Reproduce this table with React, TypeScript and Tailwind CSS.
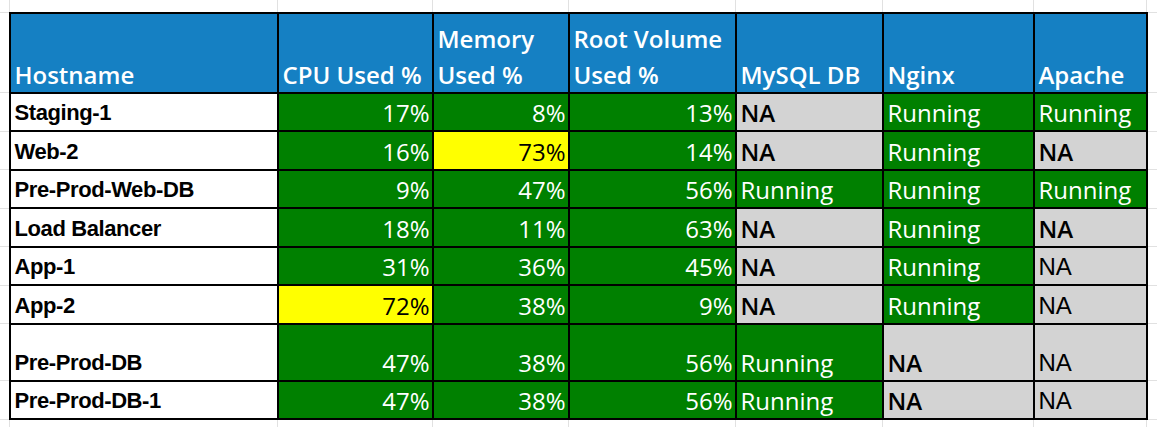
import React from 'react';

type Tone = 'green' | 'yellow' | 'gray';
type Cell = { text: string; tone: Tone; kind?: 'num' | 'text' | 'naBold' | 'naPlain' };

const hosts: { name: string; tall?: boolean; cells: Cell[] }[] = [
  {
    name: 'Staging-1',
    cells: [
      { text: '17%', tone: 'green', kind: 'num' },
      { text: '8%', tone: 'green', kind: 'num' },
      { text: '13%', tone: 'green', kind: 'num' },
      { text: 'NA', tone: 'gray', kind: 'naBold' },
      { text: 'Running', tone: 'green' },
      { text: 'Running', tone: 'green' },
    ],
  },
  {
    name: 'Web-2',
    cells: [
      { text: '16%', tone: 'green', kind: 'num' },
      { text: '73%', tone: 'yellow', kind: 'num' },
      { text: '14%', tone: 'green', kind: 'num' },
      { text: 'NA', tone: 'gray', kind: 'naBold' },
      { text: 'Running', tone: 'green' },
      { text: 'NA', tone: 'gray', kind: 'naBold' },
    ],
  },
  {
    name: 'Pre-Prod-Web-DB',
    cells: [
      { text: '9%', tone: 'green', kind: 'num' },
      { text: '47%', tone: 'green', kind: 'num' },
      { text: '56%', tone: 'green', kind: 'num' },
      { text: 'Running', tone: 'green' },
      { text: 'Running', tone: 'green' },
      { text: 'Running', tone: 'green' },
    ],
  },
  {
    name: 'Load Balancer',
    cells: [
      { text: '18%', tone: 'green', kind: 'num' },
      { text: '11%', tone: 'green', kind: 'num' },
      { text: '63%', tone: 'green', kind: 'num' },
      { text: 'NA', tone: 'gray', kind: 'naBold' },
      { text: 'Running', tone: 'green' },
      { text: 'NA', tone: 'gray', kind: 'naBold' },
    ],
  },
  {
    name: 'App-1',
    cells: [
      { text: '31%', tone: 'green', kind: 'num' },
      { text: '36%', tone: 'green', kind: 'num' },
      { text: '45%', tone: 'green', kind: 'num' },
      { text: 'NA', tone: 'gray', kind: 'naBold' },
      { text: 'Running', tone: 'green' },
      { text: 'NA', tone: 'gray', kind: 'naPlain' },
    ],
  },
  {
    name: 'App-2',
    cells: [
      { text: '72%', tone: 'yellow', kind: 'num' },
      { text: '38%', tone: 'green', kind: 'num' },
      { text: '9%', tone: 'green', kind: 'num' },
      { text: 'NA', tone: 'gray', kind: 'naBold' },
      { text: 'Running', tone: 'green' },
      { text: 'NA', tone: 'gray', kind: 'naPlain' },
    ],
  },
  {
    name: 'Pre-Prod-DB',
    tall: true,
    cells: [
      { text: '47%', tone: 'green', kind: 'num' },
      { text: '38%', tone: 'green', kind: 'num' },
      { text: '56%', tone: 'green', kind: 'num' },
      { text: 'Running', tone: 'green' },
      { text: 'NA', tone: 'gray', kind: 'naBold' },
      { text: 'NA', tone: 'gray', kind: 'naPlain' },
    ],
  },
  {
    name: 'Pre-Prod-DB-1',
    cells: [
      { text: '47%', tone: 'green', kind: 'num' },
      { text: '38%', tone: 'green', kind: 'num' },
      { text: '56%', tone: 'green', kind: 'num' },
      { text: 'Running', tone: 'green' },
      { text: 'NA', tone: 'gray', kind: 'naBold' },
      { text: 'NA', tone: 'gray', kind: 'naPlain' },
    ],
  },
];

const toneClass: Record<Tone, string> = {
  green: 'bg-[#008000] text-white',
  yellow: 'bg-[#ffff00] text-black',
  gray: 'bg-[#d3d3d3] text-black',
};

const kindClass = {
  num: "text-right pr-[2px] font-['Open_Sans',sans-serif] text-[24px]",
  text: "text-left pl-[4px] font-['Open_Sans',sans-serif] text-[24px]",
  naBold: "text-left pl-[4px] font-['Open_Sans',sans-serif] font-semibold text-[24px]",
  naPlain: "text-left pl-[4px] font-['Liberation_Sans',Arial,sans-serif] text-[24px]",
};

// excel gridline cell around the table
const grid = 'border border-[#e1e1e1] p-0';
const cellBase = 'border-2 border-black align-bottom leading-[28px] pb-[3px] whitespace-nowrap overflow-hidden';
const headCell = `${cellBase} bg-[#1580c3] text-white text-left pl-[4px] font-['Open_Sans',sans-serif] font-semibold text-[24px] leading-[36px]`;

const headers: React.ReactNode[] = [
  'Hostname',
  'CPU Used %',
  <>Memory<br />Used %</>,
  <>Root Volume<br />Used %</>,
  'MySQL DB',
  'Nginx',
  'Apache',
];

const App: React.FC = () => {
  return (
    <div className="w-[1157px] h-[427px] bg-white overflow-hidden">
      <table className="table-fixed border-collapse w-[1168px] -mt-[1px] -ml-[1px]">
        <colgroup>
          <col className="w-[10px]" />
          <col className="w-[268px]" />
          <col className="w-[155px]" />
          <col className="w-[136px]" />
          <col className="w-[167px]" />
          <col className="w-[147px]" />
          <col className="w-[151px]" />
          <col className="w-[113px]" />
          <col />
        </colgroup>
        <tbody>
          {/* row above the table */}
          <tr className="h-[13px]">
            {Array.from({ length: 9 }).map((_, i) => (
              <td key={i} className={grid} />
            ))}
          </tr>

          <tr className="h-[80px]">
            <td className={grid} />
            {headers.map((h, i) => (
              <th key={i} className={headCell}>
                <div className="-mb-[4px]">{h}</div>
              </th>
            ))}
            <td className={grid} />
          </tr>

          {hosts.map((row) => (
            <tr key={row.name} className={row.tall ? 'h-[57px]' : 'h-[38.5px]'}>
              <td className={grid} />
              <td className={`${cellBase} bg-white text-black pl-[4px] font-['Liberation_Sans',Arial,sans-serif] font-bold text-[22px] tracking-[-0.4px]`}>
                {row.name}
              </td>
              {row.cells.map((c, i) => (
                <td key={i} className={`${cellBase} ${toneClass[c.tone]} ${kindClass[c.kind ?? 'text']}`}>
                  {c.text}
                </td>
              ))}
              <td className={grid} />
            </tr>
          ))}

          {/* row below the table */}
          <tr className="h-[20px]">
            {Array.from({ length: 9 }).map((_, i) => (
              <td key={i} className={grid} />
            ))}
          </tr>
        </tbody>
      </table>
    </div>
  );
};

export default App;
